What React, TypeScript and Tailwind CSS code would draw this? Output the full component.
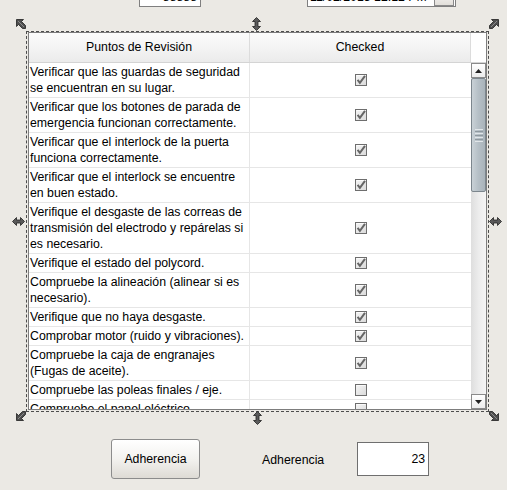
import React from "react";

type Row = { lines: string[]; checked: boolean };

const rows: Row[] = [
  { lines: ["Verificar que las guardas de seguridad", "se encuentran en su lugar."], checked: true },
  { lines: ["Verificar que los botones de parada de", "emergencia funcionan correctamente."], checked: true },
  { lines: ["Verificar que el interlock de la puerta", "funciona correctamente."], checked: true },
  { lines: ["Verificar que el interlock se encuentre", "en buen estado."], checked: true },
  {
    lines: [
      "Verifique el desgaste de las correas de",
      "transmisión del electrodo y repárelas si",
      "es necesario.",
    ],
    checked: true,
  },
  { lines: ["Verifique el estado del polycord."], checked: true },
  { lines: ["Compruebe la alineación (alinear si es", "necesario)."], checked: true },
  { lines: ["Verifique que no haya desgaste."], checked: true },
  { lines: ["Comprobar motor (ruido y vibraciones)."], checked: true },
  { lines: ["Compruebe la caja de engranajes", "(Fugas de aceite)."], checked: true },
  { lines: ["Compruebe las poleas finales / eje."], checked: false },
  { lines: ["Compruebe el panel eléctrico."], checked: false },
];

function CheckBox({ checked }: { checked: boolean }) {
  return (
    <svg width="12" height="12" viewBox="0 0 12 12">
      <defs>
        <linearGradient id="cbfill" x1="0" y1="0" x2="1" y2="1">
          <stop offset="0" stopColor="#f6f6f6" />
          <stop offset="1" stopColor="#d9d9d9" />
        </linearGradient>
      </defs>
      <rect x="0.5" y="0.5" width="11" height="11" fill="url(#cbfill)" stroke="#6e6e6e" />
      <path d="M1.5 1.5 H10.5" stroke="#ffffff" strokeWidth="1" opacity="0.8" />
      {checked && (
        <path d="M2.6 5.8 L4.9 8.9 L10 1.8" fill="none" stroke="#666666" strokeWidth="2" />
      )}
    </svg>
  );
}

// little resize handles around the selected component
function VArrow() {
  return (
    <svg width="9" height="14" viewBox="0 0 9 14">
      <path
        d="M4.5 0.5 L8.5 4.5 L6 4.5 L6 9.5 L8.5 9.5 L4.5 13.5 L0.5 9.5 L3 9.5 L3 4.5 L0.5 4.5 Z"
        fill="#5a5a5a"
        stroke="#222"
        strokeWidth="0.8"
      />
    </svg>
  );
}

function HArrow() {
  return (
    <svg width="13" height="9" viewBox="0 0 13 9">
      <path
        d="M0.5 4.5 L4.5 0.5 L4.5 3 L8.5 3 L8.5 0.5 L12.5 4.5 L8.5 8.5 L8.5 6 L4.5 6 L4.5 8.5 Z"
        fill="#5a5a5a"
        stroke="#222"
        strokeWidth="0.8"
      />
    </svg>
  );
}

function CornerArrow({ rotate }: { rotate: number }) {
  return (
    <svg width="10" height="10" viewBox="0 0 10 10" style={{ transform: `rotate(${rotate}deg)` }}>
      <path
        d="M0.5 0.5 H7.5 L5.5 2.5 L9.5 6.5 V9.5 H6.5 L2.5 5.5 L0.5 7.5 Z"
        fill="#4f4f4f"
        stroke="#1f1f1f"
        strokeWidth="0.8"
      />
      <path d="M2 2 L8 8" stroke="#8a8a8a" strokeWidth="1" />
    </svg>
  );
}

function ScrollButton({ up }: { up: boolean }) {
  return (
    <div className="h-[15px] w-[15px] shrink-0 border border-[#8a8a8a] bg-gradient-to-b from-[#ffffff] to-[#ececec] flex items-center justify-center">
      <svg width="7" height="4" viewBox="0 0 7 4">
        {up ? <path d="M0 4 L3.5 0 L7 4 Z" fill="#222" /> : <path d="M0 0 L3.5 4 L7 0 Z" fill="#222" />}
      </svg>
    </div>
  );
}

function ScrollBar() {
  return (
    <div className="w-[15px] flex flex-col bg-gradient-to-r from-[#dedede] via-[#ececec] to-[#f5f5f5]">
      <ScrollButton up />
      <div className="h-[114px] shrink-0 rounded-[2px] border border-[#7c868d] bg-gradient-to-r from-[#c9d1d6] via-[#b5bfc6] to-[#a9b3ba] flex flex-col items-center justify-center gap-[1px]">
        <div className="w-[8px] h-[1px] bg-[#e1e6e9]" />
        <div className="w-[8px] h-[1px] bg-[#8f999f]" />
        <div className="w-[8px] h-[1px] bg-[#e1e6e9]" />
        <div className="w-[8px] h-[1px] bg-[#8f999f]" />
        <div className="w-[8px] h-[1px] bg-[#e1e6e9]" />
        <div className="w-[8px] h-[1px] bg-[#8f999f]" />
        <div className="w-[8px] h-[1px] bg-[#e1e6e9]" />
      </div>
      <div className="flex-1" />
      <ScrollButton up={false} />
    </div>
  );
}

export default function App() {
  return (
    <div className="relative w-[507px] h-[490px] overflow-hidden bg-[#ebe9e4] text-black font-['Liberation_Sans',Arial,sans-serif] text-[12.3px]">
      {/* cut-off row of fields above the table */}
      <div className="h-[7px] overflow-hidden flex items-end">
        <div className="w-[116px] h-[22px] shrink-0 flex items-end justify-end pb-[4px] leading-[14px]">
          Técnico
        </div>
        <div className="ml-[23px] w-[62px] h-[22px] shrink-0 border border-[#7f7f7f] bg-white flex items-end justify-end pr-[3px] pb-[2px] leading-[14px]">
          88888
        </div>
        <div className="ml-[106px] w-[149px] h-[22px] shrink-0 border border-[#7f7f7f] bg-white flex items-end justify-between pl-[2px] leading-[14px]">
          <span className="mb-[2px]">11/02/2013 12:12 PM</span>
          <div className="w-[20px] h-[20px] mr-px border border-[#8a8a8a] bg-gradient-to-b from-[#ffffff] to-[#e2dfda]" />
        </div>
      </div>

      {/* selected scroll pane with dashed outline */}
      <div className="mt-[24px] ml-[26px] w-[463px] h-[381px] border border-dashed border-[#4d4d4d] px-px pb-px">
        <div className="h-full border border-[#7d7d7d] bg-white flex flex-col">
          <div className="h-[30px] shrink-0 flex border-b border-[#d4d4d4]">
            <div className="w-[221px] shrink-0 border-r border-[#dcdcdc] bg-gradient-to-b from-[#fbfbfb] via-[#f4f4f4] to-[#ebebeb] flex items-center justify-center">
              Puntos de Revisión
            </div>
            <div className="w-[221px] shrink-0 border-r border-[#dcdcdc] bg-gradient-to-b from-[#fbfbfb] via-[#f4f4f4] to-[#ebebeb] flex items-center justify-center">
              Checked
            </div>
            <div className="flex-1 bg-white" />
          </div>
          <div className="flex-1 flex min-h-0">
            <div className="w-[442px] overflow-hidden">
              {rows.map((row, i) => (
                <div key={i} className="flex border-b border-[#e6e6e6]">
                  <div className="w-[221px] shrink-0 border-r border-[#e6e6e6] py-px pl-px leading-[16px] whitespace-nowrap overflow-hidden">
                    {row.lines.map((line, j) => (
                      <div key={j}>{line}</div>
                    ))}
                  </div>
                  <div className="flex-1 flex items-center justify-center">
                    <CheckBox checked={row.checked} />
                  </div>
                </div>
              ))}
            </div>
            <ScrollBar />
          </div>
        </div>
      </div>

      {/* bottom controls */}
      <div className="mt-[27px] ml-[111px] flex items-center">
        <button
          type="button"
          className="w-[89px] h-[40px] rounded-[3px] border border-[#8c8c8c] bg-gradient-to-b from-[#ffffff] via-[#f3f2ef] to-[#dedbd5] text-black"
        >
          Adherencia
        </button>
        <div className="ml-[62px] mt-[2px]">Adherencia</div>
        <div className="ml-[33px] w-[72px] h-[34px] border border-[#6f6f6f] bg-white flex items-center justify-end pr-[3px]">
          23
        </div>
      </div>

      {/* resize handles */}
      <div className="absolute left-[16px] top-[19px]">
        <CornerArrow rotate={0} />
      </div>
      <div className="absolute left-[489px] top-[19px]">
        <CornerArrow rotate={90} />
      </div>
      <div className="absolute left-[16px] top-[411px]">
        <CornerArrow rotate={270} />
      </div>
      <div className="absolute left-[489px] top-[411px]">
        <CornerArrow rotate={180} />
      </div>
      <div className="absolute left-[252px] top-[17px]">
        <VArrow />
      </div>
      <div className="absolute left-[253px] top-[411px]">
        <VArrow />
      </div>
      <div className="absolute left-[12px] top-[217px]">
        <HArrow />
      </div>
      <div className="absolute left-[489px] top-[217px]">
        <HArrow />
      </div>
    </div>
  );
}
